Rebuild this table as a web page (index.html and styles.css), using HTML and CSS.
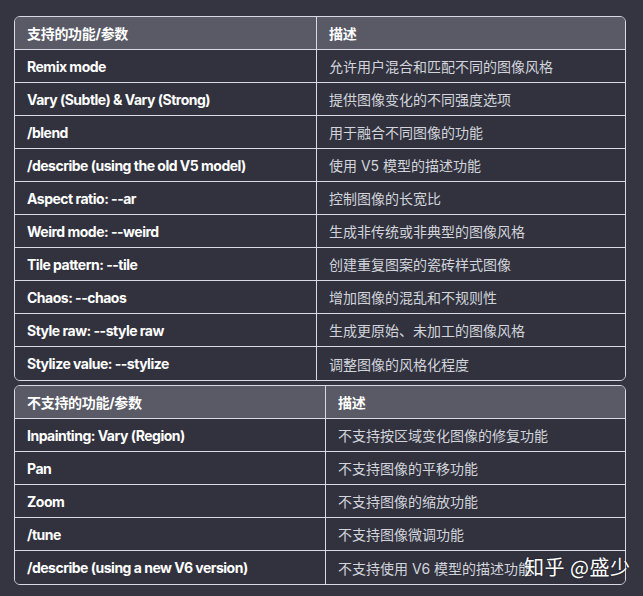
FILE: index.html
```html
<!DOCTYPE html>
<html lang="zh">
<head>
<meta charset="utf-8">
<link rel="stylesheet" href="styles.css">
</head>
<body>
<div class="page">
  <table class="grid grid-a">
    <thead>
      <tr><th class="c1">支持的功能/参数</th><th class="c2">描述</th></tr>
    </thead>
    <tbody>
      <tr><td class="c1">Remix mode</td><td class="c2">允许用户混合和匹配不同的图像风格</td></tr>
      <tr><td class="c1">Vary (Subtle) &amp; Vary (Strong)</td><td class="c2">提供图像变化的不同强度选项</td></tr>
      <tr><td class="c1">/blend</td><td class="c2">用于融合不同图像的功能</td></tr>
      <tr><td class="c1">/describe (using the old V5 model)</td><td class="c2">使用 V5 模型的描述功能</td></tr>
      <tr><td class="c1">Aspect ratio: --ar</td><td class="c2">控制图像的长宽比</td></tr>
      <tr><td class="c1">Weird mode: --weird</td><td class="c2">生成非传统或非典型的图像风格</td></tr>
      <tr><td class="c1">Tile pattern: --tile</td><td class="c2">创建重复图案的瓷砖样式图像</td></tr>
      <tr><td class="c1">Chaos: --chaos</td><td class="c2">增加图像的混乱和不规则性</td></tr>
      <tr><td class="c1">Style raw: --style raw</td><td class="c2">生成更原始、未加工的图像风格</td></tr>
      <tr><td class="c1">Stylize value: --stylize</td><td class="c2">调整图像的风格化程度</td></tr>
    </tbody>
  </table>
  <table class="grid grid-b">
    <thead>
      <tr><th class="c1">不支持的功能/参数</th><th class="c2">描述</th></tr>
    </thead>
    <tbody>
      <tr><td class="c1">Inpainting: Vary (Region)</td><td class="c2">不支持按区域变化图像的修复功能</td></tr>
      <tr><td class="c1">Pan</td><td class="c2">不支持图像的平移功能</td></tr>
      <tr><td class="c1">Zoom</td><td class="c2">不支持图像的缩放功能</td></tr>
      <tr><td class="c1">/tune</td><td class="c2">不支持图像微调功能</td></tr>
      <tr><td class="c1">/describe (using a new V6 version)</td><td class="c2">不支持使用 V6 模型的描述功能</td></tr>
    </tbody>
  </table>
  <div class="watermark">知乎 @盛少</div>
</div>
</body>
</html>
```

FILE: styles.css
```css
html, body {
  margin: 0;
  padding: 0;
  background: #343541;
}
.page {
  position: relative;
  width: 643px;
  height: 596px;
  box-sizing: border-box;
  padding: 16px 17px 0 14px;
  display: flex;
  flex-direction: column;
  gap: 4px;
  font-family: Inter, "Noto Sans CJK SC", sans-serif;
}
.grid {
  width: 612px;
  border-collapse: separate;
  border-spacing: 0;
  border: 1px solid #d9d9e3;
  border-radius: 6px;
  overflow: hidden;
  table-layout: fixed;
}
.grid th, .grid td {
  height: 33px;
  padding: 0 0 0 12px;
  box-sizing: border-box;
  text-align: left;
  font-size: 14px;
  border-bottom: 1px solid #d9d9e3;
  white-space: nowrap;
}
.grid tbody tr:last-child td {
  border-bottom: none;
}
.grid .c1 {
  border-right: 1px solid #d9d9e3;
}
.grid th {
  background: #5a5a66;
  color: #ffffff;
  font-weight: 700;
  letter-spacing: -0.3px;
}
.grid td {
  background: #32323e;
}
.grid td.c1 {
  color: #ffffff;
  font-weight: 700;
  letter-spacing: -0.5px;
}
.grid td.c2 {
  color: #d1d5db;
  font-weight: 400;
}
.grid-a .c1 { width: 302px; }
.grid-b .c1 { width: 311px; }
.watermark {
  position: absolute;
  left: 524px;
  top: 552px;
  color: #ffffff;
  font-size: 20px;
  font-family: "Noto Sans CJK SC", sans-serif;
  letter-spacing: 0.5px;
  text-shadow: 0 0 2px rgba(0,0,0,0.5);
}
```
